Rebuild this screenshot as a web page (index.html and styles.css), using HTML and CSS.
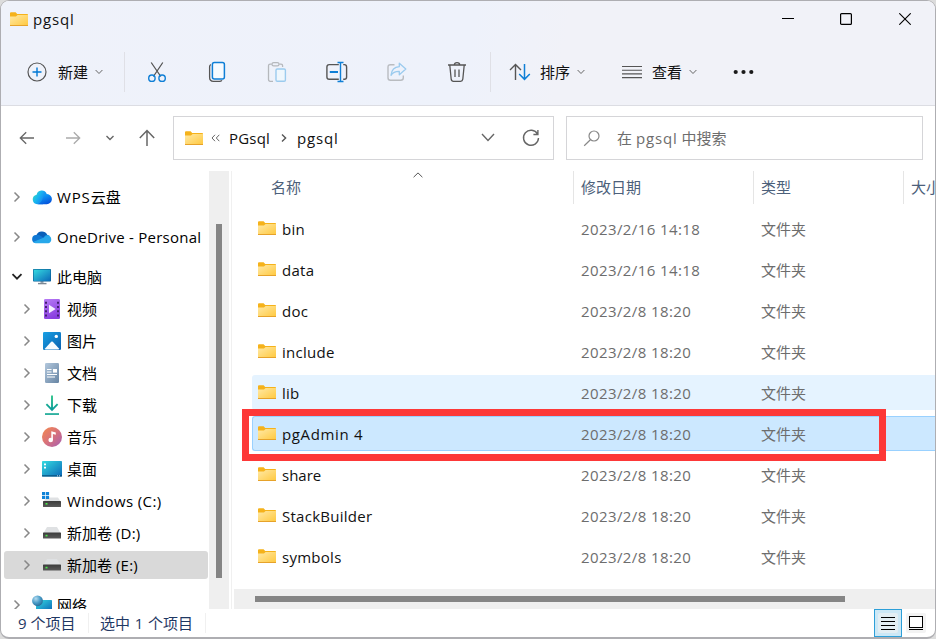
FILE: index.html
```html
<!DOCTYPE html>
<html lang="zh-CN">
<head>
  <meta charset="UTF-8" />
  <title>pgsql</title>
  <link rel="stylesheet" href="styles.css">
</head>
<body>
  <!-- 图标 -->
  <svg class="defs" width="0" height="0">
    <defs>
      <linearGradient id="gFolder" x1="0" y1="0" x2="1" y2="1"><stop offset="0" stop-color="#ffe9a6"/><stop offset="1" stop-color="#ffc83d"/></linearGradient>
      <linearGradient id="gScreen" x1="0" y1="0" x2="1" y2="1"><stop offset="0" stop-color="#35dbe0"/><stop offset="1" stop-color="#0b68b8"/></linearGradient>
      <linearGradient id="gVideo" x1="0" y1="0" x2="0.4" y2="1"><stop offset="0" stop-color="#b87cf5"/><stop offset="1" stop-color="#8a3fe0"/></linearGradient>
      <linearGradient id="gPic" x1="0" y1="0" x2="1" y2="1"><stop offset="0" stop-color="#18a0e4"/><stop offset="1" stop-color="#0a60b0"/></linearGradient>
      <linearGradient id="gDoc" x1="0" y1="0" x2="1" y2="1"><stop offset="0" stop-color="#b3c8dd"/><stop offset="1" stop-color="#6684a3"/></linearGradient>
      <linearGradient id="gMusic" x1="0" y1="0" x2="1" y2="1"><stop offset="0" stop-color="#f58a4c"/><stop offset="0.5" stop-color="#d8727b"/><stop offset="1" stop-color="#a55fb5"/></linearGradient>
      <linearGradient id="gDown" x1="0" y1="0" x2="0" y2="1"><stop offset="0" stop-color="#2fc48a"/><stop offset="1" stop-color="#0b9c9a"/></linearGradient>
      <linearGradient id="gWps" x1="0" y1="0" x2="1" y2="0.6"><stop offset="0" stop-color="#3fe3b8"/><stop offset="0.5" stop-color="#18b4f0"/><stop offset="1" stop-color="#1278f0"/></linearGradient>
      <linearGradient id="gWps2" x1="0" y1="0" x2="0.6" y2="1"><stop offset="0" stop-color="#0fb4ff"/><stop offset="1" stop-color="#0654dc"/></linearGradient>
      <linearGradient id="gDisk" x1="0" y1="0" x2="0" y2="1"><stop offset="0" stop-color="#3c3c3c"/><stop offset="1" stop-color="#5a5a5a"/></linearGradient>
      <radialGradient id="gGlobe" cx="0.35" cy="0.3" r="0.8"><stop offset="0" stop-color="#b5dcf0"/><stop offset="0.5" stop-color="#4a9cc8"/><stop offset="1" stop-color="#1f628f"/></radialGradient>
    </defs>
    <symbol id="folder" viewBox="0 0 18 14">
      <path d="M0 1.2Q0 .3 1 .3H5.6L7.2 2H17.2Q18 2 18 2.8V6H0z" fill="#f5b21b"/>
      <path d="M0 4.6H6L7.6 3H18V13Q18 14 17 14H1Q0 14 0 13z" fill="url(#gFolder)"/>
      <path d="M0 13.5H18" stroke="#e6a22a"/>
    </symbol>
    <symbol id="right" viewBox="0 0 8 12"><path d="M1.5 1.5L6 6L1.5 10.5" fill="none" stroke="currentColor" stroke-width="1.5"/></symbol>
    <symbol id="down" viewBox="0 0 8 6"><path d="M.6 1L4 4.5L7.4 1" fill="none" stroke="currentColor"/></symbol>
    <symbol id="disk" viewBox="0 0 18 12">
      <path d="M4 0H14L17.5 6H.5z" fill="#dfe1e3"/>
      <rect x="0" y="5.5" width="18" height="6" rx=".6" fill="url(#gDisk)"/>
      <rect x="2.5" y="7.8" width="2" height="1.6" fill="#4bea4b"/>
    </symbol>
  </svg>

  <div class="window">
    <div class="head">
      <div class="titlebar">
        <svg class="folder" width="18" height="14"><use href="#folder"/></svg>
        <span class="title">pgsql</span>
        <div class="controls">
          <svg width="12" height="12" viewBox="0 0 12 12"><path d="M0 5.5H12" stroke="#000"/></svg>
          <svg width="12" height="12" viewBox="0 0 12 12"><rect x=".6" y=".6" width="10.8" height="10.8" rx="1" fill="none" stroke="#000" stroke-width="1.2"/></svg>
          <svg width="12" height="12" viewBox="0 0 12 12"><path d="M.3 .3L11.7 11.7M11.7 .3L.3 11.7" stroke="#000" stroke-width="1.1"/></svg>
        </div>
      </div>

      <div class="toolbar">
        <div class="tool new">
          <svg width="20" height="20" viewBox="0 0 20 20" fill="none"><circle cx="10" cy="10" r="9" stroke="#555" stroke-width="1.2"/><path d="M10 5.5V14.5M5.5 10H14.5" stroke="#0078d4" stroke-width="1.4"/></svg>
          <span>新建</span>
          <svg class="caret" width="8" height="6"><use href="#down"/></svg>
        </div>
        <div class="icons">
          <svg width="24" height="24" viewBox="0 0 24 24" fill="none"><path d="M6.2 2.5L15.8 16.5M17.8 2.5L8.4 16.5" stroke="#555" stroke-width="1.3"/><circle cx="6.9" cy="18.2" r="3.2" stroke="#0f7fd6" stroke-width="1.4"/><circle cx="17.1" cy="18.2" r="3.2" stroke="#0f7fd6" stroke-width="1.4"/></svg>
          <svg width="24" height="24" viewBox="0 0 24 24" fill="none"><path d="M5.8 4.5Q4.6 5.2 4.6 6.8V17.6Q4.6 21.4 8.4 21.4H14.4Q16 21.4 17 20.4" stroke="#555" stroke-width="1.3"/><rect x="7.4" y="2.6" width="12" height="16.4" rx="2" stroke="#0f7fd6" stroke-width="1.5" fill="#f7fbff"/></svg>
          <svg width="24" height="24" viewBox="0 0 24 24" fill="none"><path d="M8 21.3H5.2Q3.5 21.3 3.5 19.6V5.8Q3.5 4.2 5.2 4.2H6.8M14.2 4.2H16Q17.6 4.2 17.6 5.8V7" stroke="#b5b8bc" stroke-width="1.3"/><rect x="7" y="2.6" width="7" height="3.2" rx="1.6" stroke="#b5b8bc" stroke-width="1.2"/><rect x="11" y="9" width="9.4" height="12.3" rx="1.3" stroke="#9bcbee" stroke-width="1.4" fill="#eff7fd"/></svg>
          <svg width="24" height="24" viewBox="0 0 24 24" fill="none"><path d="M13.8 4.6H4.2Q1.9 4.6 1.9 6.9V16.9Q1.9 19.2 4.2 19.2H13.8M18.2 4.6H19.4Q21.6 4.6 21.6 6.9V16.9Q21.6 19.2 19.4 19.2H18.2" stroke="#555" stroke-width="1.4"/><path d="M4.8 12H13" stroke="#0f7fd6" stroke-width="2.2"/><path d="M15.5 2.5V21.5M12.5 2.5H18.5M12.5 21.5H18.5" stroke="#0f7fd6" stroke-width="1.4"/></svg>
          <svg width="24" height="24" viewBox="0 0 24 24" fill="none"><path d="M9.5 4.7H5.5Q3 4.7 3 7.2V17.8Q3 20.3 5.5 20.3H15.8Q18.3 20.3 18.3 17.8V15.4" stroke="#b9bcc0" stroke-width="1.4"/><path d="M14.3 3.2L20.8 9L14.3 14.8V11.4Q8.6 11.2 6 15.3Q6.8 7.2 14.3 6.7z" stroke="#9bcbee" stroke-width="1.3" stroke-linejoin="round"/></svg>
          <svg width="24" height="24" viewBox="0 0 24 24" fill="none"><path d="M3 5H21M9.3 4.8Q9.3 2.6 12 2.6Q14.7 2.6 14.7 4.8M4.8 5.2L6.2 19.2Q6.5 21.3 8.5 21.3H15.5Q17.5 21.3 17.8 19.2L19.2 5.2M10 9.6V17M14 9.6V17" stroke="#555" stroke-width="1.3"/></svg>
        </div>
        <div class="tool sort">
          <svg width="22" height="20" viewBox="0 0 22 20" fill="none"><path d="M6.5 18V3M1 8L6.5 2.4L12 8" stroke="#555" stroke-width="1.4"/><path d="M15.5 2V17M10.2 12L15.5 17.4L20.8 12" stroke="#0f7fd6" stroke-width="1.5"/></svg>
          <span>排序</span>
          <svg class="caret" width="8" height="6"><use href="#down"/></svg>
        </div>
        <div class="tool view">
          <svg width="20" height="14" viewBox="0 0 20 14"><path d="M0 1.5H20M0 5.2H20M0 8.9H20M0 12.6H20" stroke="#555" stroke-width="1.1"/></svg>
          <span>查看</span>
          <svg class="caret" width="8" height="6"><use href="#down"/></svg>
        </div>
        <svg width="21" height="6" viewBox="0 0 21 6" fill="#1a1a1a"><circle cx="2.7" cy="3" r="2.1"/><circle cx="10.5" cy="3" r="2.1"/><circle cx="18.3" cy="3" r="2.1"/></svg>
      </div>
    </div>

    <div class="nav">
      <div class="arrows">
        <svg width="16" height="14" viewBox="0 0 16 14" fill="none" stroke="#666" stroke-width="1.3"><path d="M15 7H1.5M7.2 1.2L1.3 7L7.2 12.8"/></svg>
        <svg width="16" height="14" viewBox="0 0 16 14" fill="none" stroke="#aaa" stroke-width="1.3"><path d="M1 7H14.5M8.8 1.2L14.7 7L8.8 12.8"/></svg>
        <svg width="8" height="6" viewBox="0 0 8 6" fill="none" stroke="#666" stroke-width="1.4"><path d="M.5 1L4 4.5L7.5 1"/></svg>
        <svg width="16" height="18" viewBox="0 0 16 18" fill="none" stroke="#666" stroke-width="1.5"><path d="M8 17V1.5M.8 9L8 1.5L15.2 9"/></svg>
      </div>
      <div class="address">
        <svg class="folder" width="18" height="14"><use href="#folder"/></svg>
        <svg class="more" width="9" height="8" viewBox="0 0 9 8" fill="none" stroke="#666"><path d="M4 .8L1 4L4 7.2M8.3 .8L5.3 4L8.3 7.2"/></svg>
        <span class="crumb first">PGsql</span>
        <svg class="sep" width="6" height="8" viewBox="0 0 6 8" fill="none" stroke="#555" stroke-width="1.4"><path d="M1 .6L4.6 4L1 7.4"/></svg>
        <span class="crumb wide">pgsql</span>
        <svg class="drop" width="14" height="9" viewBox="0 0 14 9" fill="none" stroke="#666" stroke-width="1.4"><path d="M1 1L7 7.4L13 1"/></svg>
        <svg width="18" height="18" viewBox="0 0 18 18" fill="none" stroke="#666" stroke-width="1.4"><path d="M15.6 5.2A7.5 7.5 0 1 0 16.5 9M15.9 1V5.5H11.4"/></svg>
      </div>
      <div class="search">
        <svg width="18" height="18" viewBox="0 0 18 18" fill="none" stroke="#888" stroke-width="1.2"><circle cx="11" cy="7" r="5"/><path d="M7.4 10.7L1.2 16.8"/></svg>
        <span>在 <b class="wide">pgsql</b> 中搜索</span>
      </div>
    </div>

    <div class="main">
      <div class="sidebar">
        <div class="tree">
          <div class="item top">
            <svg class="arrow" width="8" height="12"><use href="#right"/></svg>
            <svg width="20" height="20" viewBox="0 0 20 20"><path d="M5.3 17.2A4.8 4.8 0 0 1 4.6 7.7A5.3 5.3 0 0 1 14.6 6.6L11 17.2z" fill="url(#gWps)"/><path d="M6 17.2Q10 15 11 10.5Q12.2 6.8 15 7A5.1 5.1 0 0 1 14.6 17.2z" fill="url(#gWps2)"/></svg>
            <span><b class="wide">WPS</b>云盘</span>
          </div>
          <div class="item top">
            <svg class="arrow" width="8" height="12"><use href="#right"/></svg>
            <svg width="20" height="20" viewBox="0 0 20 20"><path d="M4.3 8.2A6 6 0 0 1 15.2 7.6L11 12z" fill="#0a5fb8"/><path d="M3.8 16A4 4 0 0 1 4.5 8Q6.5 7.4 8.4 8.7L13 11.6L5 16z" fill="#0f78d4"/><path d="M11.6 10.8Q13 7.2 16 8L18 9L13 12z" fill="#1590df"/><path d="M3.8 16.2Q2.4 16.2 1.2 15L12 10.5Q13.2 8.6 16 8.6A3.9 3.9 0 0 1 16.4 16.2z" fill="#28a8ea"/></svg>
            <span class="latin">OneDrive - Personal</span>
          </div>
          <div class="item top open">
            <svg class="arrow" width="12" height="8" viewBox="0 0 12 8" fill="none" stroke="#222" stroke-width="1.8"><path d="M1.5 1.2L6 5.7L10.5 1.2"/></svg>
            <svg width="20" height="20" viewBox="0 0 20 20"><path d="M8.5 14H11.5V17H8.5z" fill="#9aa7b2"/><path d="M6 16.6H14.5" stroke="#7c8894" stroke-width="1.4"/><rect x="1" y="2" width="18" height="12.6" rx=".8" fill="#075c93"/><rect x="1.6" y="2.6" width="16.8" height="11.4" fill="url(#gScreen)"/></svg>
            <span>此电脑</span>
          </div>
          <div class="item">
            <svg class="arrow" width="8" height="12"><use href="#right"/></svg>
            <svg width="20" height="20" viewBox="0 0 20 20"><rect x="2" y="0" width="16" height="20" rx="1.2" fill="url(#gVideo)"/><path d="M4 2.8V18M16 2.8V18" stroke="#432070" stroke-width="2" stroke-dasharray="2 2.2"/><path d="M7 5.8L13.6 10L7 14.2z" fill="#f5efff"/></svg>
            <span>视频</span>
          </div>
          <div class="item">
            <svg class="arrow" width="8" height="12"><use href="#right"/></svg>
            <svg width="20" height="20" viewBox="0 0 20 20"><rect x="1" y="1" width="18" height="18" rx="1.3" fill="url(#gPic)"/><path d="M2.6 18L9.2 10.8Q10 10 10.8 10.8L17.4 18Q17 18.4 16.4 18.4H3.6Q3 18.4 2.6 18z" fill="#f6fbff"/><circle cx="14.3" cy="5.4" r="1.7" fill="#fff"/></svg>
            <span>图片</span>
          </div>
          <div class="item">
            <svg class="arrow" width="8" height="12"><use href="#right"/></svg>
            <svg width="20" height="20" viewBox="0 0 20 20"><rect x="3" y="0" width="14" height="20" rx="1.2" fill="url(#gDoc)"/><path d="M5 6.5H9.5M5 9H9.5M5 11.5H15M5 14H13" stroke="#fff" stroke-width="1.2"/><rect x="11" y="6" width="4" height="3.6" fill="#fff"/></svg>
            <span>文档</span>
          </div>
          <div class="item">
            <svg class="arrow" width="8" height="12"><use href="#right"/></svg>
            <svg width="20" height="20" viewBox="0 0 20 20" fill="none"><path d="M10 .5V14.8M4.4 9.2L10 14.8L15.6 9.2" stroke="url(#gDown)" stroke-width="1.9"/><path d="M3 18.2H17V19.9H3z" fill="#18a996"/></svg>
            <span>下载</span>
          </div>
          <div class="item">
            <svg class="arrow" width="8" height="12"><use href="#right"/></svg>
            <svg width="20" height="20" viewBox="0 0 20 20"><circle cx="10" cy="10" r="10" fill="url(#gMusic)"/><path d="M9.3 4.2L13.8 5.4V7.7L10.9 7V13H9.3z" fill="#fff"/><circle cx="8.7" cy="13" r="2.3" fill="#fff"/></svg>
            <span>音乐</span>
          </div>
          <div class="item">
            <svg class="arrow" width="8" height="12"><use href="#right"/></svg>
            <svg width="20" height="20" viewBox="0 0 20 20"><rect x="0" y="2" width="20" height="15.6" rx=".8" fill="url(#gScreen)"/><path d="M0 16.2H20V17Q20 17.6 19.4 17.6H.6Q0 17.6 0 17z" fill="#07507f"/><path d="M2 4.5H4V6.2H2zM2 7.8H4V9.5H2zM15 16.4H16V17.2H15zM17 16.4H18V17.2H17z" fill="#fff"/></svg>
            <span>桌面</span>
          </div>
          <div class="item">
            <svg class="arrow" width="8" height="12"><use href="#right"/></svg>
            <svg width="20" height="20" viewBox="0 0 20 20"><path d="M5 6.5H16L18.6 10.5H1.4z" fill="#dfe1e3"/><rect x="1" y="10" width="18" height="6" rx=".6" fill="url(#gDisk)"/><rect x="3.5" y="12" width="2" height="1.6" fill="#4bea4b"/><path d="M0 1H3.2V4.1H0zM3.9 1H7.1V4.1H3.9zM0 4.8H3.2V8H0zM3.9 4.8H7.1V8H3.9z" fill="#0f83d8"/></svg>
            <span class="latin drive">Windows (C:)</span>
          </div>
          <div class="item">
            <svg class="arrow" width="8" height="12"><use href="#right"/></svg>
            <svg class="disk" width="18" height="12"><use href="#disk"/></svg>
            <span>新加卷 <b class="latin">(D:)</b></span>
          </div>
          <div class="item selected">
            <svg class="arrow" width="8" height="12"><use href="#right"/></svg>
            <svg class="disk" width="18" height="12"><use href="#disk"/></svg>
            <span>新加卷 <b class="latin">(E:)</b></span>
          </div>
          <div class="item top">
            <svg class="arrow" width="8" height="12"><use href="#right"/></svg>
            <svg width="20" height="20" viewBox="0 0 20 20"><rect x="4" y="5" width="16" height="11" rx=".6" fill="url(#gScreen)"/><circle cx="5.5" cy="5.8" r="5.4" fill="url(#gGlobe)"/></svg>
            <span>网络</span>
          </div>
        </div>
        <div class="vscroll"><div class="thumb"></div></div>
      </div>

      <div class="files">
        <div class="columns">
          <div class="name">名称<svg class="asc" width="10" height="6" viewBox="0 0 10 6" fill="none" stroke="#555"><path d="M.6 5.2L5 .9L9.4 5.2"/></svg></div>
          <div>修改日期</div>
          <div>类型</div>
          <div>大小</div>
        </div>
        <div class="list">
          <div class="row"><svg class="folder" width="18" height="14"><use href="#folder"/></svg><span class="name">bin</span><span class="date">2023/2/16 14:18</span><span>文件夹</span></div>
          <div class="row"><svg class="folder" width="18" height="14"><use href="#folder"/></svg><span class="name">data</span><span class="date">2023/2/16 14:18</span><span>文件夹</span></div>
          <div class="row"><svg class="folder" width="18" height="14"><use href="#folder"/></svg><span class="name">doc</span><span class="date">2023/2/8 18:20</span><span>文件夹</span></div>
          <div class="row"><svg class="folder" width="18" height="14"><use href="#folder"/></svg><span class="name">include</span><span class="date">2023/2/8 18:20</span><span>文件夹</span></div>
          <div class="row hover"><svg class="folder" width="18" height="14"><use href="#folder"/></svg><span class="name">lib</span><span class="date">2023/2/8 18:20</span><span>文件夹</span></div>
          <div class="row active"><svg class="folder" width="18" height="14"><use href="#folder"/></svg><span class="name">pgAdmin 4</span><span class="date">2023/2/8 18:20</span><span>文件夹</span><div class="mark"></div></div>
          <div class="row"><svg class="folder" width="18" height="14"><use href="#folder"/></svg><span class="name share">share</span><span class="date">2023/2/8 18:20</span><span>文件夹</span></div>
          <div class="row"><svg class="folder" width="18" height="14"><use href="#folder"/></svg><span class="name">StackBuilder</span><span class="date">2023/2/8 18:20</span><span>文件夹</span></div>
          <div class="row"><svg class="folder" width="18" height="14"><use href="#folder"/></svg><span class="name">symbols</span><span class="date">2023/2/8 18:20</span><span>文件夹</span></div>
        </div>
        <div class="hscroll"><div class="thumb"></div></div>
      </div>
    </div>

    <div class="status">
      <span class="count">9 个项目</span>
      <span class="picked">选中 1 个项目</span>
      <div class="modes">
        <div class="mode on"><svg width="20" height="20" viewBox="0 0 20 20"><rect width="20" height="20" rx="2" fill="#e3eef3"/><path d="M3 4.5H17M3 8.5H17M3 12.5H17M3 16.5H17" stroke="#000"/></svg></div>
        <div class="mode"><svg width="20" height="20" viewBox="0 0 20 20"><rect width="20" height="20" rx="2" fill="#f3f3f3"/><rect x="3.5" y="3.5" width="13" height="11" fill="#fff" stroke="#000"/><path d="M3 16.5H17" stroke="#000"/></svg></div>
      </div>
    </div>
  </div>
</body>
</html>
```
FILE: styles.css
```css
* {
  box-sizing: border-box;
}
body {
  margin: 0;
  height: 639px;
  overflow: hidden;
  background: #dcdcdc;
  font-family: "Open Sans", "Noto Sans CJK SC", sans-serif;
  font-size: 15px;
  line-height: 20px;
  color: #111;
  white-space: nowrap;
}
svg {
  display: block;
  flex: none;
}
b {
  font-weight: normal;
}
.latin {
  letter-spacing: 0.24px;
}
.drive {
  letter-spacing: 0.38px;
}
.wide {
  letter-spacing: 0.85px;
}
.defs {
  position: absolute;
}
.window {
  display: flex;
  flex-direction: column;
  width: 936px;
  height: 639px;
  border: 1px solid #aeaeb2;
  border-bottom-width: 2px;
  border-radius: 9px;
  background: #fff;
  overflow: hidden;
}

/* 标题栏和工具栏 */
.head {
  height: 105px;
  flex: none;
  background: linear-gradient(100deg, #eff2fa 0%, #eef2fb 50%, #f1f2f8 60%, #f1f2f8 100%);
  border-bottom: 1px solid #dcdde3;
}
.titlebar {
  display: flex;
  align-items: center;
  height: 36px;
  padding-left: 9px;
}
.title {
  margin-left: 5px;
  letter-spacing: 0.85px;
}
.controls {
  display: flex;
  gap: 46px;
  margin-left: auto;
  padding-right: 24px;
}
.controls svg:last-child {
  margin-left: 1px;
}
.toolbar {
  display: flex;
  align-items: center;
  height: 70px;
}
.tool {
  display: flex;
  align-items: center;
}
.caret {
  margin-left: 7px;
  color: #666;
}
.new {
  width: 124px;
  height: 40px;
  padding-left: 26px;
  border-right: 1px solid #dfe0e6;
}
.new span {
  margin-left: 11px;
}
.icons {
  display: flex;
  align-items: center;
  gap: 36px;
  width: 366px;
  height: 40px;
  padding-left: 20px;
  border-right: 1px solid #dfe0e6;
}
.sort {
  width: 131px;
  padding-left: 18px;
}
.sort span {
  margin-left: 9px;
}
.view {
  width: 111px;
}
.view span {
  margin-left: 10px;
}

/* 地址栏 */
.nav {
  display: flex;
  align-items: center;
  height: 65px;
  flex: none;
  padding-bottom: 1px;
}
.arrows {
  display: flex;
  align-items: center;
  width: 172px;
  padding-left: 18px;
}
.arrows svg:nth-child(2) {
  margin-left: 30px;
}
.arrows svg:nth-child(3) {
  margin-left: 25px;
}
.arrows svg:nth-child(4) {
  margin-left: 25px;
}
.address,
.search {
  display: flex;
  align-items: center;
  height: 44px;
  border: 1px solid #d5d5d8;
}
.address {
  width: 381px;
  padding-left: 11px;
  padding-bottom: 1px;
}
.more {
  margin-left: 8px;
}
.crumb.first {
  margin-left: 9px;
  letter-spacing: 0.2px;
}
.sep {
  margin: 0 10px 0 11px;
}
.drop {
  margin-left: auto;
  margin-right: 27px;
}
.address svg:last-child {
  margin-right: 13px;
}
.search {
  width: 357px;
  margin-left: 12px;
  padding-left: 16px;
  color: #6d6d6d;
}
.search span {
  margin-left: 16px;
}

/* 左侧导航 */
.main {
  display: flex;
  height: 438px;
  flex: none;
}
.sidebar {
  display: flex;
  width: 231px;
  border-right: 1px solid #f0f0f0;
  overflow: hidden;
}
.tree {
  width: 208px;
  padding: 7px 1px 0 3px;
  color: #000;
}
.item {
  display: flex;
  align-items: center;
  height: 28px;
  margin-top: 4px;
  padding-left: 19px;
  border-radius: 3px;
}
.item.top {
  margin-top: 12px;
  padding-left: 9px;
}
.item.top:first-child {
  margin-top: 5px;
}
.item span {
  margin-left: 5px;
}
.arrow {
  margin-right: 11px;
  color: #888;
}
.open .arrow {
  margin-left: -2px;
  margin-right: 9px;
}
.item .disk {
  margin: 0 1px;
}
.selected {
  background: #d9d9d9;
}
.vscroll {
  width: 20px;
  padding: 53px 7px 0;
  background: #efefef;
}
.vscroll .thumb {
  height: 354px;
  background: #858585;
}

/* 文件列表 */
.files {
  flex: 1;
  display: flex;
  flex-direction: column;
  min-width: 0;
  overflow: hidden;
}
.columns {
  display: grid;
  grid-template-columns: 341px 180px 150px 100px;
  height: 33px;
  flex: none;
  color: #4c607a;
}
.columns div {
  display: flex;
  align-items: center;
  padding-left: 7px;
  padding-bottom: 1px;
  border-left: 1px solid #e5e5e5;
}
.columns .name {
  position: relative;
  padding-left: 39px;
  border-left: 0;
}
.asc {
  position: absolute;
  left: 181px;
  top: 1px;
}
.list {
  display: flex;
  flex-direction: column;
  gap: 6px;
  padding: 7px 0 0 20px;
}
.row {
  position: relative;
  display: grid;
  grid-template-columns: 18px 305px 180px 150px;
  align-items: center;
  height: 35px;
  padding-left: 5px;
  border: 1px solid transparent;
  border-right: 0;
  border-radius: 3px 0 0 3px;
  color: #6d6d6d;
}
.row .folder {
  margin-top: -2px;
}
.row .name {
  padding-left: 6px;
  color: #111;
  letter-spacing: 0.27px;
}
.row .share {
  letter-spacing: 0;
}
.row .date {
  letter-spacing: 0.4px;
}
.row.hover {
  background: #e5f3ff;
}
.row.active {
  background: #cce8ff;
  border-color: #99d1ff;
}
.row.active .name {
  letter-spacing: 0.65px;
}
.mark {
  position: absolute;
  left: -11px;
  top: -8px;
  width: 644px;
  height: 52px;
  border: 7px solid #fd3838;
  box-shadow: inset 0 -3px #fff;
}
.hscroll {
  height: 20px;
  margin-top: auto;
  margin-left: 2px;
  padding: 7px 0 0 21px;
  background: #efefef;
}
.hscroll .thumb {
  width: 590px;
  height: 6px;
  background: #858585;
}

/* 状态栏 */
.status {
  display: flex;
  align-items: center;
  flex: 1;
  padding-left: 17px;
  color: #1f3864;
}
.count {
  width: 71px;
  border-right: 1px solid #f0f0f0;
}
.picked {
  width: 117px;
  padding-left: 11px;
  border-right: 1px solid #f0f0f0;
  word-spacing: 0.8px;
}
.modes {
  display: flex;
  height: 28px;
  margin-left: auto;
  padding-right: 5px;
}
.mode {
  display: flex;
  align-items: center;
  justify-content: center;
  width: 28px;
}
.mode.on {
  background: #cce8f6;
  border: 1px solid #2d9fd8;
}
```
